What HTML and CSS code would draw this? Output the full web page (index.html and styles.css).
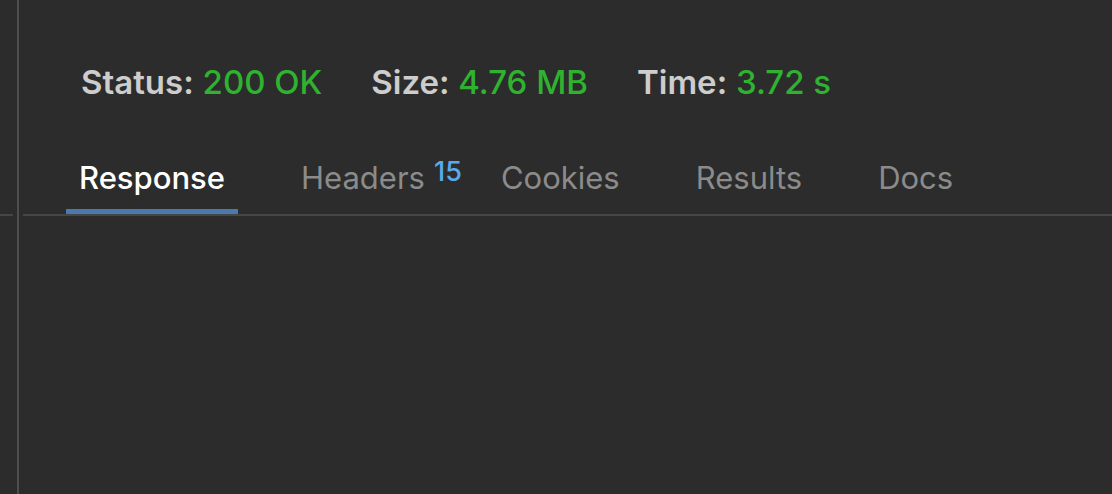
FILE: index.html
```html
<!DOCTYPE html>
<html lang="en">
<head>
<meta charset="utf-8">
<title>Response</title>
<link rel="stylesheet" href="styles.css">
</head>
<body>
<div class="app">
  <div class="side">
    <div class="side-top"></div>
  </div>
  <div class="divider"></div>
  <div class="main">
    <div class="stats">
      <div class="stat"><span class="label">Status:</span> <span class="value">200 OK</span></div>
      <div class="stat"><span class="label">Size:</span> <span class="value">4.76 MB</span></div>
      <div class="stat"><span class="label">Time:</span> <span class="value">3.72 s</span></div>
    </div>
    <div class="tabbar">
      <div class="tab active">Response</div>
      <div class="tab">Headers<span class="badge">15</span></div>
      <div class="tab">Cookies</div>
      <div class="tab">Results</div>
      <div class="tab">Docs</div>
    </div>
    <div class="content"></div>
  </div>
</div>
</body>
</html>
```
FILE: styles.css
```css
html, body {
  margin: 0;
  padding: 0;
  height: 100%;
  background: #2c2c2c;
}
body {
  font-family: Inter, "Noto Sans", sans-serif;
  -webkit-font-smoothing: antialiased;
}
.app {
  display: flex;
  height: 494px;
  overflow: hidden;
}
.side {
  width: 17px;
  flex: none;
}
.side-top {
  height: 214px;
  margin-right: 4px;
  border-bottom: 2px solid #464646;
}
.divider {
  width: 2px;
  flex: none;
  background: #4e4e4e;
}
.main {
  flex: 1;
  display: flex;
  flex-direction: column;
}
.stats {
  display: flex;
  gap: 49px;
  padding: 60px 0 0 62px;
  height: 44px;
  align-items: center;
  font-size: 33px;
  font-weight: 500;
}
.label {
  color: #cdcdcd;
  font-weight: 600;
}
.value {
  color: #2fb22f;
}
.tabbar {
  display: flex;
  gap: 50px;
  margin-left: 4px;
  padding-left: 43px;
  margin-top: 50px;
  border-bottom: 2px solid #464646;
}
.tab {
  position: relative;
  padding: 0 13px;
  height: 60px;
  line-height: 48px;
  font-size: 31px;
  color: #8b8b8b;
  border-bottom: 5px solid transparent;
  box-sizing: border-box;
}
.tab.active {
  color: #ffffff;
  font-weight: 500;
  border-bottom-color: #4a7aad;
}
.badge {
  position: absolute;
  left: calc(100% - 4px);
  top: 3px;
  line-height: 30px;
  font-size: 27px;
  font-weight: 500;
  color: #5aa9ef;
}
.content {
  flex: 1;
}
```
